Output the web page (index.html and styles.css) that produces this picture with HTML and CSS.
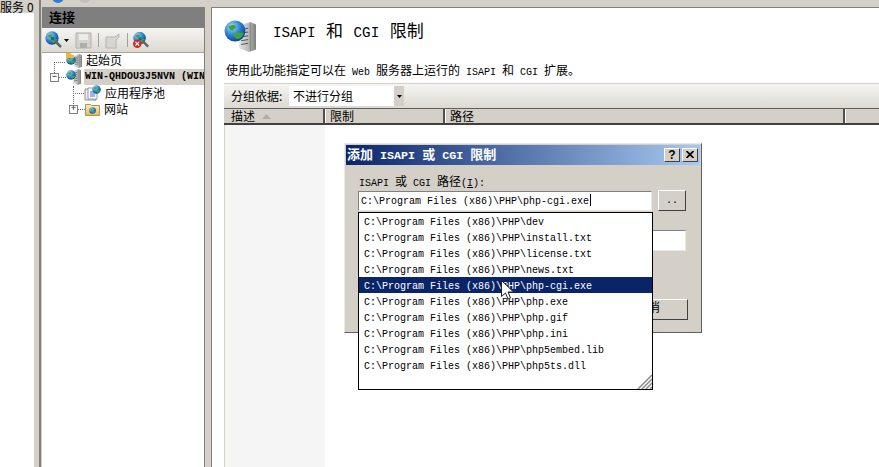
FILE: index.html
```html
<!DOCTYPE html>
<html lang="zh">
<head>
<meta charset="utf-8">
<title>ISAPI 和 CGI 限制</title>
<link rel="stylesheet" href="styles.css">
</head>
<body>
<svg class="defs" width="0" height="0">
  <defs>
    <radialGradient id="gb" cx="35%" cy="30%" r="75%">
      <stop offset="0" stop-color="#a8dcf8"/><stop offset=".55" stop-color="#2a7fd0"/><stop offset="1" stop-color="#0c3f94"/>
    </radialGradient>
    <linearGradient id="srv" x1="0" x2="1" y1="0" y2="0">
      <stop offset="0" stop-color="#e6e8e6"/><stop offset=".6" stop-color="#b4b8b4"/><stop offset="1" stop-color="#7c807c"/>
    </linearGradient>
    <linearGradient id="fold" x1="0" x2="0" y1="0" y2="1">
      <stop offset="0" stop-color="#fff0b8"/><stop offset="1" stop-color="#e4b860"/>
    </linearGradient>
    <symbol id="globe" viewBox="0 0 20 20">
      <circle cx="10" cy="10" r="9.500" fill="url(#gb)"/>
      <path d="M4 6c3-2 6-2 7 0 0 2-3 2-3 4-2 0-3-2-4-4zM8 13c3-2 7-2 10-1-1 3-4 6-7 5-1-2-3-2-3-4z" fill="#3fa53a"/>
    </symbol>
    <symbol id="server" viewBox="0 0 12 24" preserveAspectRatio="none">
      <path d="M0 3 8 0 12 2v20l-5 2-7-3z" fill="url(#srv)"/>
      <path d="M8 1v22" stroke="#70746f" stroke-width=".6" fill="none"/>
      <path d="M1.500 6 6.500 5M1.500 9 6.500 8M1.500 12 6.500 11M1.500 15 6.500 14M1.500 18 6.500 17" stroke="#555b55" fill="none"/>
    </symbol>
    <symbol id="wrench" viewBox="0 0 18 18">
      <use href="#globe" x="0" y="0" width="14" height="14"/>
      <path d="M10 10l6 6" stroke="#5c6468" stroke-width="2.500"/>
      <path d="M6 6h3v3H6z" fill="#2c5d96"/>
    </symbol>
  </defs>
</svg>

<aside class="strip">
  <div class="strip-title"><span class="c">服务</span><span class="c strip-num">0</span></div>
</aside>

<div class="console">
  <div class="topbar">
    <svg class="peek" width="50" height="3" viewBox="0 0 50 3"><circle cx="7" cy="-3" r="6" fill="#2a7fd0"/><circle cx="34" cy="-3" r="6" fill="#c0c0c0"/></svg>
  </div>
  <div class="workspace">
    <section class="conn">
      <header class="conn-head"><span class="c">连接</span></header>
      <div class="conn-tools">
        <svg class="tool" width="18" height="18"><use href="#wrench"/></svg>
        <svg class="drop" width="5" height="3" viewBox="0 0 5 3"><path d="M0 0h5L2.500 3z"/></svg>
        <svg class="tool save" width="17" height="17" viewBox="0 0 17 17"><path d="M1 1h15v15H1z" fill="#d2d2ce" stroke="#b0b0ac"/><path d="M4 2h9v6H4z" fill="#ecece8"/><path d="M5 11h7v5H5z" fill="#aeaeaa"/></svg>
        <span class="tsep"></span>
        <svg class="tool" width="17" height="17" viewBox="0 0 17 17"><path d="M2 5h9l4 -3v3l-3 3v8H2z" fill="#d6d6d2" stroke="#b4b4b0"/></svg>
        <span class="tsep"></span>
        <svg class="tool" width="17" height="18" viewBox="0 0 18 18"><use href="#wrench"/><circle cx="4.500" cy="13" r="4.500" fill="#d02828"/><path d="M2.500 11l4 4M6.500 11l-4 4" stroke="#fff" stroke-width="1.200"/></svg>
      </div>
      <ul class="tree">
        <li class="tn tn-start">
          <span class="dots-h d1"></span>
          <svg class="tn-ico ico-start" width="17" height="16" viewBox="0 0 17 16"><use href="#server" x="9" y="1" width="8" height="14"/><use href="#globe" x="1" y="2" width="10" height="10"/><path d="M1 0h4l2 2h2v3H1z" fill="#f0b830"/></svg>
          <span class="c tn-label">起始页</span>
        </li>
        <li class="tn tn-host">
          <span class="box">−</span>
          <span class="dots-h d2"></span>
          <svg class="tn-ico" width="15" height="16" viewBox="0 0 15 16"><use href="#server" x="7" y="0" width="8" height="16"/><use href="#globe" x="0" y="1" width="10" height="10"/></svg>
          <span class="tn-label host-label">WIN-QHDOU3J5NVN (WIN-QHDOU3J5NVN\Administrator)</span>
        </li>
        <li class="tn tn-pool">
          <span class="dots-h d3"></span>
          <svg class="tn-ico" width="17" height="16" viewBox="0 0 17 16"><path d="M1 4h11v11H1z" fill="#eee" stroke="#9a8a8a"/><path d="M4 3h9v11H4z" fill="#fff" stroke="#8c9ab0"/><path d="M6 7h5M6 9h5M6 11h5" stroke="#3a70c0"/><use href="#globe" x="8" y="0" width="9" height="9"/></svg>
          <span class="c tn-label">应用程序池</span>
        </li>
        <li class="tn tn-sites">
          <span class="box">+</span>
          <span class="dots-h d4"></span>
          <svg class="tn-ico" width="15" height="14" viewBox="0 0 15 14"><path d="M.5 2.500h5l1 1h8v10H.5z" fill="url(#fold)" stroke="#b89048"/><use href="#globe" x="4" y="5" width="7" height="7"/></svg>
          <span class="c tn-label">网站</span>
        </li>
        <li class="vline v1"></li>
        <li class="vline v2"></li>
      </ul>
    </section>

    <div class="splitter"></div>

    <main class="content">
      <div class="page-head">
        <svg class="page-ico" width="33" height="33" viewBox="0 0 33 33"><use href="#server" x="15" y="3" width="17" height="30"/><use href="#globe" x="0" y="1" width="22" height="22"/></svg>
        <h1 class="page-title">ISAPI <span class="c17">和</span> CGI <span class="c17">限制</span></h1>
      </div>
      <p class="page-desc"><span class="c">使用此功能指定可以在</span> Web <span class="c">服务器上运行的</span> ISAPI <span class="c">和</span> CGI <span class="c">扩展。</span></p>
      <div class="groupbar">
        <span class="c group-label">分组依据:</span>
        <div class="combo"><span class="c combo-val">不进行分组</span><span class="combo-btn"><svg width="5" height="3" viewBox="0 0 5 3"><path d="M0 0h5L2.500 3z"/></svg></span></div>
      </div>
      <div class="thead">
        <div class="th th-desc"><span class="c">描述</span><svg class="sort" width="9" height="5" viewBox="0 0 9 5"><path d="M4.500 0 9 5H0z" fill="#b0aca4"/></svg></div>
        <div class="th th-lim"><span class="c">限制</span></div>
        <div class="th th-path"><span class="c">路径</span></div>
        <div class="th th-end"></div>
      </div>
      <div class="tbody"><div class="sorted-col"></div></div>
    </main>
  </div>
</div>

<div class="dialog">
  <div class="dlg-title">
    <span class="dlg-name"><span class="c13">添加</span> ISAPI <span class="c13">或</span> CGI <span class="c13">限制</span></span>
    <span class="cap-btn">?</span>
    <span class="cap-btn"><svg class="cap-x" width="8" height="7" viewBox="0 0 8 7"><path d="M.5 0 7.500 7M7.500 0 .5 7" stroke="#000" stroke-width="1.700" fill="none"/></svg></span>
  </div>
  <div class="dlg-body">
    <label class="dlg-label">ISAPI <span class="c">或</span> CGI <span class="c">路径</span>(<u>I</u>):</label>
    <div class="path-row">
      <div class="field">C:\Program Files (x86)\PHP\php-cgi.exe<span class="caret"></span></div>
      <span class="btn browse">..</span>
    </div>
    <div class="second-row"><div class="field2"></div></div>
    <div class="btn-row"><span class="btn cancel"><span class="c">取消</span></span></div>

    <div class="suggest">
      <div class="opt">C:\Program Files (x86)\PHP\dev</div>
      <div class="opt">C:\Program Files (x86)\PHP\install.txt</div>
      <div class="opt">C:\Program Files (x86)\PHP\license.txt</div>
      <div class="opt">C:\Program Files (x86)\PHP\news.txt</div>
      <div class="opt opt-on">C:\Program Files (x86)\PHP\php-cgi.exe</div>
      <div class="opt">C:\Program Files (x86)\PHP\php.exe</div>
      <div class="opt">C:\Program Files (x86)\PHP\php.gif</div>
      <div class="opt">C:\Program Files (x86)\PHP\php.ini</div>
      <div class="opt">C:\Program Files (x86)\PHP\php5embed.lib</div>
      <div class="opt">C:\Program Files (x86)\PHP\php5ts.dll</div>
      <svg class="grip" width="15" height="15" viewBox="0 0 15 15"><path d="M15 1 1 15M15 5 5 15M15 9 9 15M15 13l-2 2" stroke="#8a8a86" stroke-width="1.500" fill="none"/></svg>
    </div>
  </div>
</div>

<svg class="cursor" width="13" height="20" viewBox="0 0 13 20"><path d="M.5.5v16l4-3.500 2.500 6 2.500-1-2.500-6h5.500z" fill="#fff" stroke="#222"/></svg>
</body>
</html>
```
FILE: styles.css
```css
* { box-sizing: border-box; }
html, body { margin: 0; height: 100%; }
body {
  width: 879px;
  height: 467px;
  overflow: hidden;
  display: flex;
  background: #d4d0c8;
  color: #000;
  font: 10px/12px "Liberation Mono", "Noto Sans CJK SC", monospace;
}
.defs { position: absolute; }
.c { font: 12px/14px "Noto Sans CJK SC", sans-serif; }
.c13 { font: 700 13px/15px "Noto Sans CJK SC", sans-serif; }
.c17 { font: 17px/18px "Noto Sans CJK SC", sans-serif; }

.strip { width: 34px; background: #fff; overflow: hidden; flex: none; }
.strip-title { height: 13px; background: #d4d0c8; white-space: nowrap; line-height: 12px; }
.strip-num { margin-left: 3px; }

.console { flex: 1; display: flex; flex-direction: column; margin-left: 5px; border-left: 2px solid #808080; min-width: 0; }
.topbar { height: 7px; flex: none; padding-left: 10px; }
.peek { display: block; }
.workspace { flex: 1; display: flex; min-height: 0; }

.conn { width: 162px; flex: none; margin-left: 1px; background: #fff; display: flex; flex-direction: column; }
.conn-head { height: 21px; background: #7f7f7f; padding: 3px 0 0 7px; flex: none; }
.conn-head .c { font-weight: 700; font-size: 13px; color: #000; }
.conn-tools {
  height: 25px; flex: none; display: flex; align-items: center; padding: 0 0 0 3px;
  background: linear-gradient(#f6f5f3, #dcd9d2);
  border-bottom: 1px solid #a8a49c;
}
.drop { margin: 0 6px 0 1px; }
.tsep { width: 1px; height: 14px; background: #a0a0a0; margin: 0 5px 0 6px; }

.tree { list-style: none; margin: 0; padding: 0; position: relative; }
.tn { height: 16px; display: flex; align-items: center; white-space: nowrap; }
.tn-ico { flex: none; }
.ico-start { margin-top: -1px; }
.tn-label { margin-left: 4px; }
.tn-start .tn-label { margin-top: -2px; }
.box {
  width: 9px; height: 9px; border: 1px solid #808080; flex: none;
  font: 9px/7px "Liberation Mono", monospace; text-align: center; background: #fff;
}
.dots-h { height: 0; border-top: 1px dotted #707070; flex: none; }
.tn-start { padding-left: 12px; }
.d1 { width: 11px; margin-top: 3px; }
.tn-host { padding-left: 8px; overflow: hidden; }
.d2 { width: 7px; }
.host-label { font-weight: 700; background: #d4d0c8; height: 16px; line-height: 16px; margin-left: 3px; padding-left: 1px; flex: 1; overflow: hidden; }
.tn-pool { padding-left: 31px; }
.d3 { width: 11px; }
.tn-sites { padding-left: 27px; }
.d4 { width: 7px; }
.vline { position: absolute; width: 0; border-left: 1px dotted #707070; }
.v1 { left: 12px; top: 9px; height: 11px; }
.v2 { left: 31px; top: 33px; height: 24px; }

.splitter { width: 8px; flex: none; border-left: 1px solid #808080; border-right: 1px solid #808080; background: #d4d0c8; }

.content { flex: 1; background: #fff; display: flex; flex-direction: column; min-width: 0; border-top: 1px solid #808080; padding-left: 12px; }
.page-head { height: 53px; display: flex; flex: none; padding-top: 11px; }
.page-ico { flex: none; }
.page-title { margin: 2px 0 0 16px; font: 400 14.2px/18px "Liberation Mono", "Noto Sans CJK SC", monospace; word-spacing: 2px; white-space: pre; }
.page-desc { margin: 0; height: 22px; padding: 2px 0 0 2px; line-height: 16px; white-space: nowrap; flex: none; }
.groupbar {
  height: 25px; flex: none; display: flex; align-items: center; padding-left: 7px;
  border-top: 1px solid #d4d0c8;
  background: linear-gradient(#f6f5f3, #dcd9d2);
}
.group-label { width: 58px; }
.combo { width: 115px; height: 20px; background: #fff; display: flex; align-items: center; justify-content: space-between; padding-left: 4px; }
.combo-btn { width: 10px; height: 20px; background: #d4d0c8; display: flex; align-items: center; justify-content: center; }
.thead { height: 17px; flex: none; display: flex; background: #d4d0c8; border-top: 1px solid #606060; border-bottom: 2px solid #404040; padding-left: 1px; }
.th { border-right: 2px solid; border-color: #505050; box-shadow: 1px 0 0 #fff; display: flex; align-items: center; padding-left: 5px; overflow: hidden; }
.th-desc { width: 100px; padding-left: 6px; }
.th-lim { width: 120px; }
.th-path { width: 400px; }
.th-end { flex: 1; border-right: 0; box-shadow: none; }
.sort { margin-left: 7px; }
.tbody { flex: 1; min-height: 0; display: flex; }
.sorted-col { width: 101px; background: #f5f5f5; border-left: 1px solid #d8d0c8; }

.dialog {
  position: absolute; left: 344px; top: 143px; width: 358px; height: 190px;
  background: #d4d0c8; padding: 1px;
  border: 1px solid; border-color: #ece9e2 #606060 #606060 #ece9e2;
  display: flex; flex-direction: column;
}
.dlg-title {
  height: 20px; flex: none; display: flex; align-items: center; gap: 2px; padding: 0 2px 0 1px;
  background: linear-gradient(90deg, #0a246a, #a6caf0);
  color: #fff; font: 700 11.7px/15px "Liberation Mono", monospace;
}
.dlg-name { flex: 1; white-space: nowrap; }
.cap-btn {
  width: 16px; height: 14px; background: #d4d0c8; color: #000; text-align: center;
  font: 700 12px/12px "Liberation Sans", sans-serif;
  border: 1px solid; border-color: #fff #404040 #404040 #fff;
}
.cap-x { display: block; margin: 2px auto 0; }
.dlg-body { flex: 1; position: relative; padding: 7px 14px 0 12px; }
.dlg-label { display: block; height: 18px; padding: 2px 0 0 1px; line-height: 16px; white-space: nowrap; }
.path-row { display: flex; gap: 6px; height: 21px; }
.field {
  width: 294px; height: 20px; margin-top: 1px; background: #fff; padding-left: 2px; line-height: 20px; white-space: nowrap;
  border: 1px solid; border-color: #808080 #ece9e2 #ece9e2 #808080;
}
.caret { display: inline-block; width: 1px; height: 12px; background: #000; vertical-align: -2px; margin-left: 1px; }
.btn {
  display: block; background: #d4d0c8; text-align: center;
  border: 1px solid; border-color: #fff #404040 #404040 #fff;
}
.browse { width: 28px; height: 21px; line-height: 19px; }
.second-row { height: 21px; margin-top: 19px; display: flex; justify-content: flex-end; }
.field2 { width: 80px; height: 21px; background: #fff; border: 1px solid; border-color: #808080 #ece9e2 #ece9e2 #808080; }
.btn-row { margin-top: 48px; display: flex; justify-content: flex-end; margin-right: -2px; }
.cancel { width: 80px; height: 21px; line-height: 17px; }

.suggest {
  position: absolute; left: 12px; top: 47px; width: 295px; height: 178px;
  background: #fff; border: 1px solid #000;
}
.opt { height: 16px; line-height: 20px; padding-left: 5px; white-space: nowrap; overflow: hidden; }
.opt-on { background: #0a246a; color: #fff; }
.grip { position: absolute; right: 0; bottom: 0; }
.cursor { position: absolute; left: 501px; top: 280px; }
```
